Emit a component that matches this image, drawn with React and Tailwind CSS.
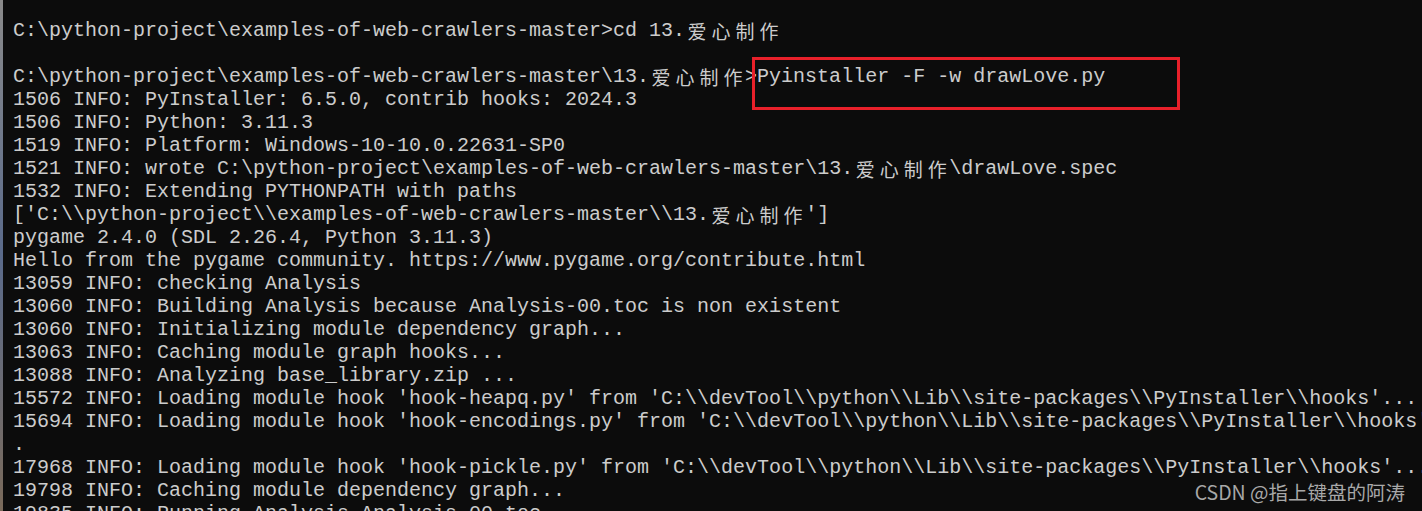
import React from "react";

const CJK = /[\u3400-\u9fff\uff00-\uffef]/;

function Line({ text }) {
  const parts = [];
  let buf = "";
  let k = 0;
  for (const ch of text) {
    if (CJK.test(ch)) {
      if (buf) {
        parts.push(<span key={k++}>{buf}</span>);
        buf = "";
      }
      parts.push(
        <span
          key={k++}
          className="inline-block h-[23px] w-[24px] text-center align-top text-[19px] leading-[23px] font-['Noto_Sans_CJK_SC',sans-serif]"
        >
          {ch}
        </span>
      );
    } else {
      buf += ch;
    }
  }
  if (buf) parts.push(<span key={k++}>{buf}</span>);
  return <div className="h-[23px] whitespace-pre">{parts.length ? parts : "\u00a0"}</div>;
}

const lines = [
  "C:\\python-project\\examples-of-web-crawlers-master>cd 13.爱心制作",
  "",
  "C:\\python-project\\examples-of-web-crawlers-master\\13.爱心制作>Pyinstaller -F -w drawLove.py",
  "1506 INFO: PyInstaller: 6.5.0, contrib hooks: 2024.3",
  "1506 INFO: Python: 3.11.3",
  "1519 INFO: Platform: Windows-10-10.0.22631-SP0",
  "1521 INFO: wrote C:\\python-project\\examples-of-web-crawlers-master\\13.爱心制作\\drawLove.spec",
  "1532 INFO: Extending PYTHONPATH with paths",
  "['C:\\\\python-project\\\\examples-of-web-crawlers-master\\\\13.爱心制作']",
  "pygame 2.4.0 (SDL 2.26.4, Python 3.11.3)",
  "Hello from the pygame community. https://www.pygame.org/contribute.html",
  "13059 INFO: checking Analysis",
  "13060 INFO: Building Analysis because Analysis-00.toc is non existent",
  "13060 INFO: Initializing module dependency graph...",
  "13063 INFO: Caching module graph hooks...",
  "13088 INFO: Analyzing base_library.zip ...",
  "15572 INFO: Loading module hook 'hook-heapq.py' from 'C:\\\\devTool\\\\python\\\\Lib\\\\site-packages\\\\PyInstaller\\\\hooks'...",
  "15694 INFO: Loading module hook 'hook-encodings.py' from 'C:\\\\devTool\\\\python\\\\Lib\\\\site-packages\\\\PyInstaller\\\\hooks'..",
  ".",
  "17968 INFO: Loading module hook 'hook-pickle.py' from 'C:\\\\devTool\\\\python\\\\Lib\\\\site-packages\\\\PyInstaller\\\\hooks'...",
  "19798 INFO: Caching module dependency graph...",
  "19835 INFO: Running Analysis Analysis-00.toc",
];

export default function App() {
  return (
    <div className="relative flex h-[511px] w-[1422px] overflow-hidden bg-[#0c0c0c]">
      <div className="w-[3px] shrink-0 bg-gradient-to-b from-[#8a8a8a] via-[#5a6a8a] to-[#7a6a5a]" />
      <div className="min-w-0 flex-1 overflow-hidden pl-[10px] pt-[19px] font-['Liberation_Mono',monospace] text-[20px] leading-[23px] text-[#cccccc]">
        {lines.map((t, i) => (
          <Line key={i} text={t} />
        ))}
      </div>
      <div className="pointer-events-none absolute left-[752px] top-[57px] h-[53px] w-[428px] border-[3px] border-[#e8202a]" />
      <div className="pointer-events-none absolute right-[17px] bottom-[8px] font-['Noto_Sans_CJK_SC',sans-serif] text-[19.5px] leading-[22px] text-[#a8a8a8]">
        CSDN @指上键盘的阿涛
      </div>
    </div>
  );
}
